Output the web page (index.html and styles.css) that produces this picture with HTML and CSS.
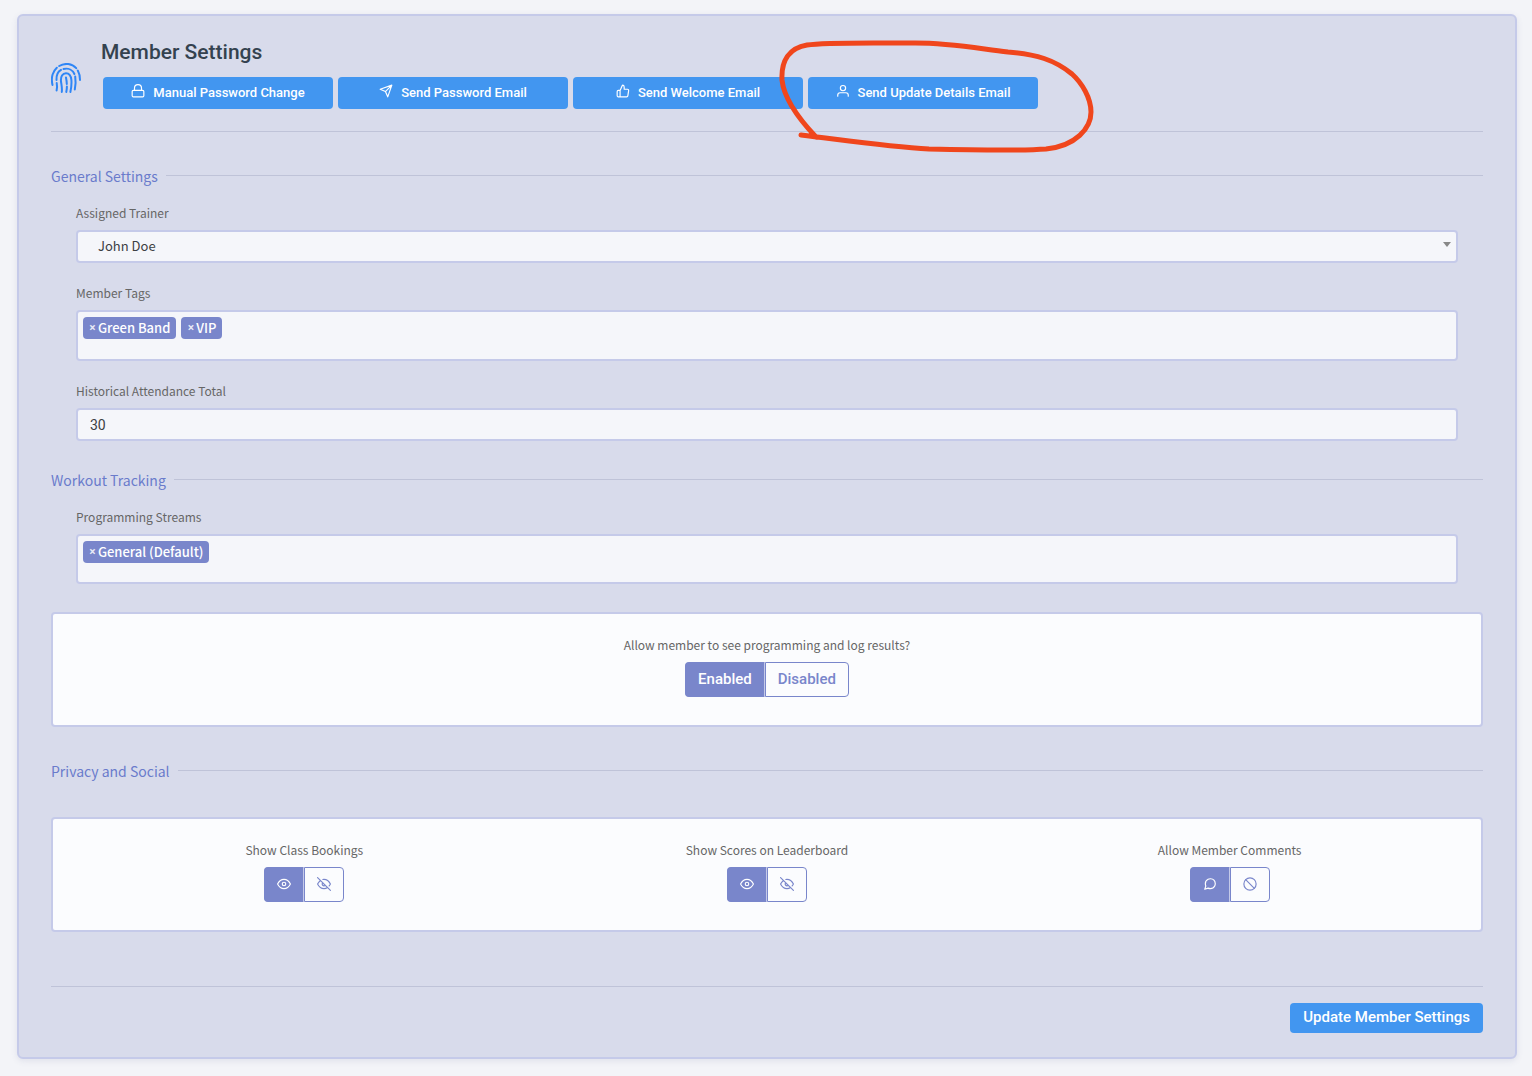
FILE: index.html
```
<!DOCTYPE html>
<html lang="en">
<head>
    <meta charset="UTF-8">
    <meta name="viewport" content="width=device-width, initial-scale=1.0">
    <title>Member Settings</title>
    <link rel="stylesheet" href="styles.css">
</head>
<body>
    <form class="card">
        <header class="card-header">
            <svg class="fingerprint" viewBox="0 0 30 30">
                <path d="M1.5 22C0.6 18 .8 14 1.6 11.5 2.5 8.500 4 6.500 5.800 4.800M8.200 3C14 -.4 21 .6 25.200 5.200M26.800 7.500C28.500 10.500 29 13 29 17"/>
                <path d="M5.500 17C5.200 12 6.800 8.700 10 6.900M12.500 6C17.500 4.800 21.700 7 23.400 11M24.200 13.500C24.900 18 24.700 22 23.800 26.500M5.700 20C6.200 22.500 6.200 25 5.600 27.500"/>
                <path d="M10.800 29C11.300 25 10.500 22 10 18.500 9.500 13.500 11.500 10.200 15 10.200 18.500 10.200 20 13 20.400 17 20.700 21.500 20.300 25 19.400 29"/>
                <path d="M15 14.500C15.500 17 15.700 18.500 15.800 21M15.900 23.500C15.900 25.500 15.700 27 15.300 29"/>
            </svg>
            <div class="header-content">
                <h1>Member Settings</h1>
                <div class="actions">
                    <button type="button" class="btn btn-action">
                        <svg class="icon" viewBox="0 0 24 24"><rect x="2" y="11" width="20" height="11" rx="2"/><path d="M6 11V7a6 6 0 0 1 12 0v4"/></svg>
                        Manual Password Change
                    </button>
                    <button type="button" class="btn btn-action">
                        <svg class="icon" viewBox="0 0 24 24"><path d="M22 2L11 13M22 2l-7 20-4-9-9-4z"/></svg>
                        Send Password Email
                    </button>
                    <button type="button" class="btn btn-action">
                        <svg class="icon" viewBox="0 0 24 24"><path d="M14 9V5a3 3 0 0 0-3-3l-4 9v11h11.280a2 2 0 0 0 2-1.700l1.380-9a2 2 0 0 0-2-2.300zM7 22H4a2 2 0 0 1-2-2v-7a2 2 0 0 1 2-2h3"/></svg>
                        Send Welcome Email
                    </button>
                    <div class="highlighted">
                        <button type="button" class="btn btn-action">
                            <svg class="icon" viewBox="0 0 24 24"><path d="M21 21v-2a4 4 0 0 0-4-4H7a4 4 0 0 0-4 4v2"/><circle cx="12" cy="7" r="4.500"/></svg>
                            Send Update Details Email
                        </button>
                        <svg class="marker" viewBox="0 0 320 120">
                            <path d="M36 97C18 78 4 59 2 40 1 21 9 8 27 5 45 2 90 3 135 3 170 3 195 8 228 12 256 14 275 20 292 34 302 43 311 58 311 72 311 88 296 106 266 109 240 111 190 110 149 109 110 107 70 101 21 95"/>
                        </svg>
                    </div>
                </div>
            </div>
        </header>

        <section>
            <h2>General Settings</h2>
            <div class="fields">
                <div class="field">
                    <label for="trainer">Assigned Trainer</label>
                    <div class="select-wrapper">
                        <select id="trainer" class="control">
                            <option>John Doe</option>
                        </select>
                    </div>
                </div>
                <div class="field">
                    <span class="label" id="tags-label">Member Tags</span>
                    <div class="control tags" role="group" aria-labelledby="tags-label">
                        <span class="tag"><button type="button" aria-label="Remove Green Band">×</button>Green Band</span>
                        <span class="tag"><button type="button" aria-label="Remove VIP">×</button>VIP</span>
                    </div>
                </div>
                <div class="field">
                    <label for="attendance">Historical Attendance Total</label>
                    <input type="text" id="attendance" class="control" value="30">
                </div>
            </div>
        </section>

        <section class="workout">
            <h2>Workout Tracking</h2>
            <div class="fields">
                <div class="field">
                    <span class="label" id="streams-label">Programming Streams</span>
                    <div class="control tags" role="group" aria-labelledby="streams-label">
                        <span class="tag"><button type="button" aria-label="Remove General (Default)">×</button>General (Default)</span>
                    </div>
                </div>
            </div>
            <div class="panel">
                <div class="option">
                    <span class="label">Allow member to see programming and log results?</span>
                    <div class="toggle">
                        <label><input type="radio" name="programming" checked><span>Enabled</span></label>
                        <label><input type="radio" name="programming"><span>Disabled</span></label>
                    </div>
                </div>
            </div>
        </section>

        <section>
            <h2>Privacy and Social</h2>
            <div class="panel privacy">
                <div class="option">
                    <span class="label">Show Class Bookings</span>
                    <div class="toggle toggle-icons">
                        <label>
                            <input type="radio" name="bookings" aria-label="Show class bookings" checked>
                            <span><svg class="icon" viewBox="0 0 24 24"><path d="M1 12s4-8 11-8 11 8 11 8-4 8-11 8S1 12 1 12z"/><circle cx="12" cy="12" r="3"/></svg></span>
                        </label>
                        <label>
                            <input type="radio" name="bookings" aria-label="Hide class bookings">
                            <span><svg class="icon" viewBox="0 0 24 24"><path d="M17.940 17.940A10.070 10.070 0 0 1 12 20C5 20 1 12 1 12a18.450 18.450 0 0 1 5.060-5.940M9.900 4.240A9.120 9.120 0 0 1 12 4c7 0 11 8 11 8a18.500 18.500 0 0 1-2.160 3.190M14.120 14.120a3 3 0 1 1-4.240-4.240M1 1l22 22"/></svg></span>
                        </label>
                    </div>
                </div>
                <div class="option">
                    <span class="label">Show Scores on Leaderboard</span>
                    <div class="toggle toggle-icons">
                        <label>
                            <input type="radio" name="scores" aria-label="Show scores" checked>
                            <span><svg class="icon" viewBox="0 0 24 24"><path d="M1 12s4-8 11-8 11 8 11 8-4 8-11 8S1 12 1 12z"/><circle cx="12" cy="12" r="3"/></svg></span>
                        </label>
                        <label>
                            <input type="radio" name="scores" aria-label="Hide scores">
                            <span><svg class="icon" viewBox="0 0 24 24"><path d="M17.940 17.940A10.070 10.070 0 0 1 12 20C5 20 1 12 1 12a18.450 18.450 0 0 1 5.060-5.940M9.900 4.240A9.120 9.120 0 0 1 12 4c7 0 11 8 11 8a18.500 18.500 0 0 1-2.160 3.190M14.120 14.120a3 3 0 1 1-4.240-4.240M1 1l22 22"/></svg></span>
                        </label>
                    </div>
                </div>
                <div class="option">
                    <span class="label">Allow Member Comments</span>
                    <div class="toggle toggle-icons">
                        <label>
                            <input type="radio" name="comments" aria-label="Allow comments" checked>
                            <span><svg class="icon" viewBox="0 0 24 24"><path d="M21 11.500a8.380 8.380 0 0 1-.9 3.800 8.500 8.500 0 0 1-7.600 4.700 8.380 8.380 0 0 1-3.800-.9L3 21l1.900-5.700a8.380 8.380 0 0 1-.9-3.800 8.500 8.500 0 0 1 4.700-7.600 8.380 8.380 0 0 1 3.800-.9h.5a8.480 8.480 0 0 1 8 8z"/></svg></span>
                        </label>
                        <label>
                            <input type="radio" name="comments" aria-label="Block comments">
                            <span><svg class="icon" viewBox="0 0 24 24"><circle cx="12" cy="12" r="10.500"/><path d="M4.600 4.600l14.800 14.800"/></svg></span>
                        </label>
                    </div>
                </div>
            </div>
        </section>

        <footer class="card-footer">
            <button type="submit" class="btn btn-submit">Update Member Settings</button>
        </footer>
    </form>
</body>
</html>
```
FILE: styles.css
```
* {
    margin: 0;
    padding: 0;
    box-sizing: border-box;
}

body {
    font-family: 'Noto Sans CJK SC', 'Noto Sans', sans-serif;
    font-size: 12px;
    line-height: 20px;
    background-color: #f3f4f8;
    color: #666;
    padding: 14px 15px 17px 17px;
}

.card {
    background-color: #d8dbeb;
    border: 2px solid #c5cae9;
    border-radius: 6px;
    padding: 22px 32px 24px;
    box-shadow: 0 2px 6px rgba(80, 90, 140, 0.12);
}

/* Header */
.card-header {
    display: flex;
    align-items: center;
    gap: 20px;
    padding-bottom: 22px;
    border-bottom: 1px solid #bfc3d8;
}

.fingerprint {
    width: 30px;
    height: 30px;
    margin-top: 8px;
    flex: none;
    fill: none;
    stroke: #2f86f6;
    stroke-width: 2;
    stroke-linecap: round;
}

h1 {
    font-family: Roboto, sans-serif;
    font-size: 21px;
    font-weight: 500;
    line-height: 28px;
    color: #34424f;
}

.actions {
    display: flex;
    flex-wrap: wrap;
    gap: 5px;
    margin: 11px 0 0 2px;
}

.btn {
    font-family: Roboto, sans-serif;
    font-weight: 500;
    color: #fff;
    background-color: #4296f0;
    border: none;
    border-radius: 4px;
    cursor: pointer;
}

.btn:hover {
    background-color: #2f86e4;
}

.btn-action {
    display: flex;
    align-items: center;
    justify-content: center;
    gap: 8px;
    width: 230px;
    height: 32px;
    padding-bottom: 2px;
    font-size: 13px;
}

.icon {
    width: 14px;
    height: 14px;
    flex: none;
    fill: none;
    stroke: currentColor;
    stroke-width: 2;
    stroke-linecap: round;
    stroke-linejoin: round;
}

.btn-action .icon {
    margin-bottom: 2px;
}

.highlighted {
    position: relative;
}

.marker {
    position: absolute;
    left: -28px;
    top: -37px;
    width: 320px;
    height: 120px;
    overflow: visible;
    pointer-events: none;
    fill: none;
    stroke: #f0461c;
    stroke-width: 5;
    stroke-linecap: round;
    stroke-linejoin: round;
}

/* Sections */
section {
    margin-top: 32px;
}

.workout {
    margin-top: 27px;
}

h2 {
    display: flex;
    align-items: center;
    gap: 8px;
    font-size: 14px;
    font-weight: 400;
    line-height: 24px;
    color: #6a7bcb;
}

h2::after {
    content: '';
    flex: 1;
    height: 1px;
    margin-bottom: 2px;
    background-color: #bfc3d8;
}

.fields {
    display: grid;
    gap: 20px;
    padding: 15px 25px 0;
}

.field label,
.label {
    display: block;
    margin-bottom: 7px;
}

.control {
    display: block;
    width: 100%;
    height: 33px;
    font-family: inherit;
    font-size: 13px;
    color: #3c4043;
    background-color: #f5f6fa;
    border: 2px solid #c5cae9;
    border-radius: 4px;
    padding: 0 12px;
    outline: none;
}

.control:focus {
    border-color: #7986cb;
}

.select-wrapper {
    position: relative;
}

.select-wrapper select {
    appearance: none;
    padding: 0 20px 2px;
}

.select-wrapper::after {
    content: '';
    position: absolute;
    right: 7px;
    top: 12px;
    border: 4px solid transparent;
    border-top: 5px solid #888;
    border-bottom: none;
    pointer-events: none;
}

input.control {
    font-family: Roboto, sans-serif;
    font-size: 14px;
}

.tags {
    display: flex;
    flex-wrap: wrap;
    align-items: flex-start;
    gap: 5px;
    height: auto;
    min-height: 51px;
    padding: 5px;
}

.workout .tags {
    min-height: 50px;
}

.tag {
    display: flex;
    align-items: center;
    gap: 2px;
    height: 22px;
    padding: 0 6px;
    font-weight: 500;
    color: #fff;
    background-color: #7986cb;
    border-radius: 4px;
}

.tag button {
    font-family: 'Noto Sans', sans-serif;
    font-size: 12px;
    font-weight: 700;
    line-height: 22px;
    color: #e8eaf6;
    background: none;
    border: none;
    cursor: pointer;
}

/* Toggle panels */
.panel {
    margin-top: 28px;
    padding: 21px 20px 28px;
    background-color: #fbfcfe;
    border: 2px solid #c5cae9;
    border-radius: 4px;
}

.privacy {
    display: grid;
    grid-template-columns: repeat(3, 1fr);
    margin-top: 34px;
}

.option {
    display: flex;
    flex-direction: column;
    align-items: center;
}

.toggle {
    display: flex;
    font-family: Roboto, sans-serif;
    font-size: 15px;
    font-weight: 500;
}

.toggle label {
    position: relative;
    cursor: pointer;
}

.toggle input {
    position: absolute;
    opacity: 0;
}

.toggle span {
    display: flex;
    align-items: center;
    justify-content: center;
    height: 35px;
    padding: 0 12px 2px;
    color: #7986cb;
    border: 1px solid #7986cb;
}

.toggle label:first-child span {
    border-right-color: #c5cae9;
    border-radius: 4px 0 0 4px;
}

.toggle label:last-child span {
    border-radius: 0 4px 4px 0;
}

.toggle input:checked + span {
    color: #fff;
    background-color: #7986cb;
}

.toggle input:focus-visible + span {
    box-shadow: 0 0 0 2px #c5cae9;
}

.toggle-icons span {
    width: 40px;
    padding: 0 0 2px;
}

/* Footer */
.card-footer {
    display: flex;
    justify-content: flex-end;
    margin-top: 54px;
    padding-top: 16px;
    border-top: 1px solid #bfc3d8;
}

.btn-submit {
    height: 30px;
    padding: 0 13px 2px;
    font-size: 15px;
}

@media (max-width: 768px) {
    .privacy {
        grid-template-columns: 1fr;
        gap: 20px;
    }
}
```
